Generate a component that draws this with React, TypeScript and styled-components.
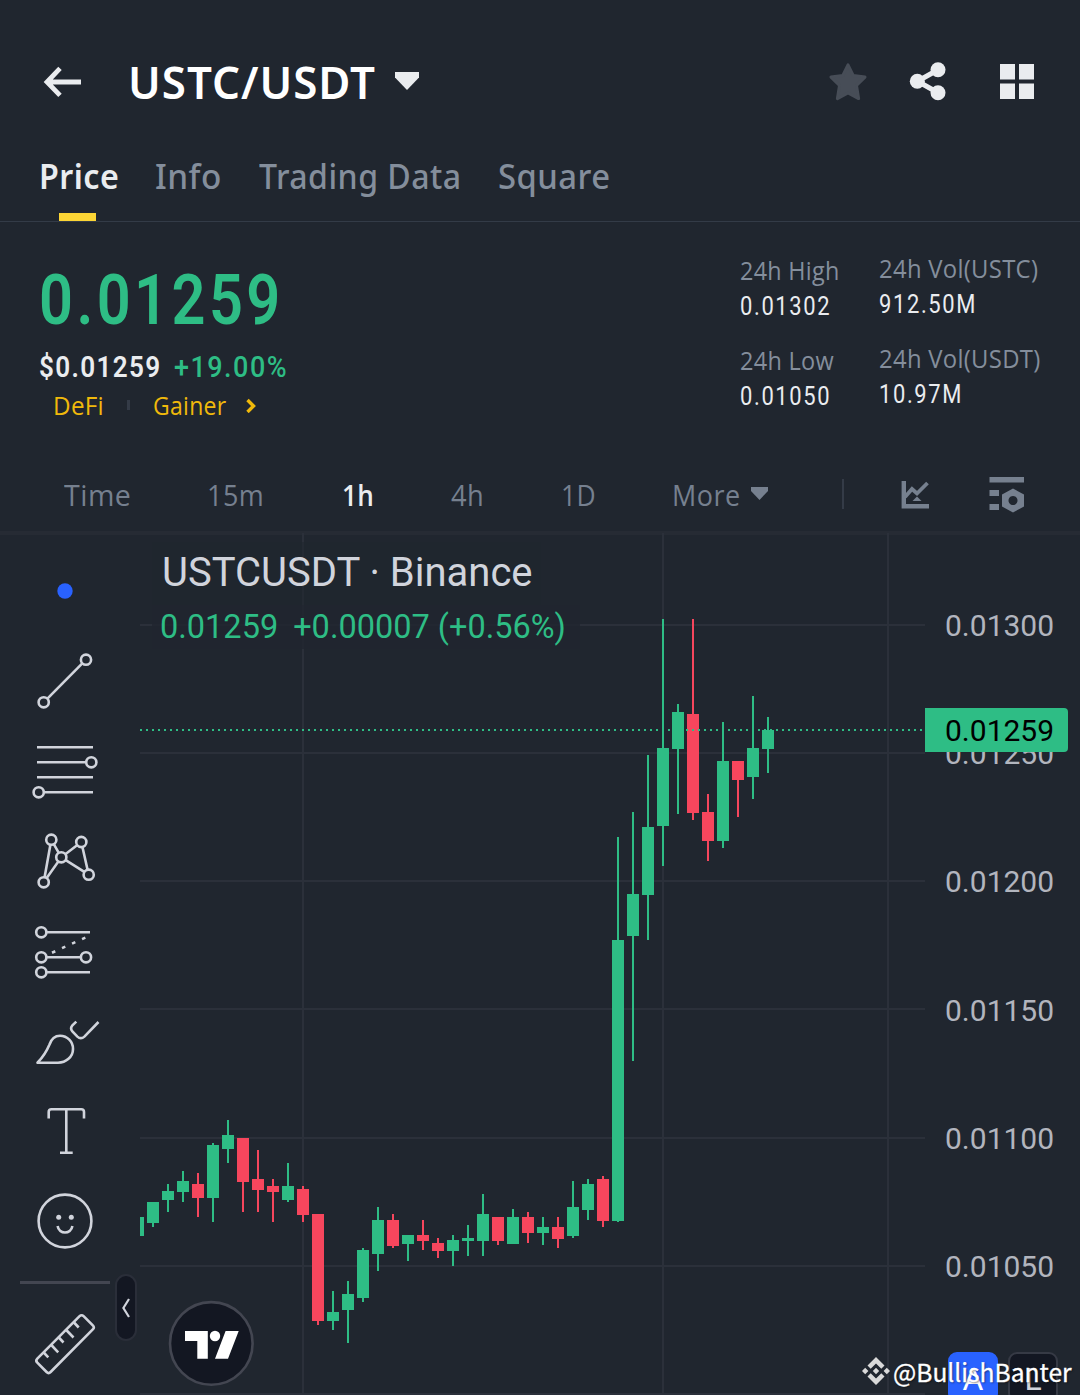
import React from "react";
import styled, { createGlobalStyle, css } from "styled-components";

const GREEN = "#2ebd85";
const RED = "#f6465d";
const BG = "#20262f";
const MUTED = "#848e9c";
const LIGHT = "#eaecef";

const GlobalStyle = createGlobalStyle`
  * { box-sizing: border-box; }
  body { margin: 0; background: ${BG}; }
`;

const Screen = styled.div`
  width: 1080px;
  height: 1395px;
  overflow: hidden;
  display: flex;
  flex-direction: column;
  background: ${BG};
  color: ${LIGHT};
  font-family: Roboto, "Liberation Sans", sans-serif;
  position: relative;
`;

const sans = css`
  font-family: "Open Sans", "Noto Sans", sans-serif;
`;

/* Text run with a fixed box width and horizontal glyph condensing. */
const Run = styled.span<{
  $size: number;
  $w: number;
  $sx?: number;
  $ls?: number;
  $weight?: number;
  $color?: string;
  $face?: "open" | "noto" | "roboto";
}>`
  ${(p) => (p.$face === "roboto" ? "" : sans)}
  ${(p) => (p.$face === "noto" ? 'font-family: "Noto Sans", sans-serif;' : "")}
  display: block;
  flex: none;
  width: ${(p) => p.$w}px;
  white-space: nowrap;
  font-size: ${(p) => p.$size}px;
  line-height: 1.2;
  font-weight: ${(p) => p.$weight ?? 400};
  letter-spacing: ${(p) => p.$ls ?? 0}px;
  color: ${(p) => p.$color ?? LIGHT};
  transform: scaleX(${(p) => p.$sx ?? 1});
  transform-origin: left center;
`;

const Header = styled.header`
  height: 134px;
  padding: 29px 46px 0 43px;
  display: flex;
  align-items: center;
`;

const TitleGroup = styled.div`
  display: flex;
  align-items: center;
  gap: 19px;
  margin-left: 45px;
  flex: 1;
`;

const HeaderActions = styled.div`
  display: flex;
  align-items: center;
  gap: 42px;
`;

const Tabs = styled.nav`
  height: 88px;
  display: flex;
  gap: 37px;
  padding-left: 38px;
  border-bottom: 1px solid #333b47;
`;

const Tab = styled.div`
  display: flex;
  flex-direction: column;
  align-items: center;
  justify-content: space-between;
  padding-top: 21px;
`;

const TabMark = styled.div`
  width: 37px;
  height: 8px;
  background: #fcd535;
`;

const Summary = styled.section`
  height: 238px;
  display: flex;
  justify-content: space-between;
  padding: 0 38px 0 39px;
`;

const PriceBlock = styled.div`
  display: flex;
  flex-direction: column;
  padding-top: 36px;
`;

const SubPrice = styled.div`
  display: flex;
  gap: 13px;
  margin-top: 8px;
`;

const Tags = styled.div`
  display: flex;
  align-items: center;
  margin: 5px 0 0 14px;
`;

const TagSep = styled.div`
  width: 3px;
  height: 10px;
  background: #343b47;
  margin: 0 23px 0 23px;
`;

const Stats = styled.div`
  display: flex;
`;

const StatCol = styled.div<{ $w: number; $top: number }>`
  width: ${(p) => p.$w}px;
  padding-top: ${(p) => p.$top}px;
`;

const Stat = styled.div`
  height: 90px;
  display: flex;
  flex-direction: column;
  gap: 6px;
`;

const Intervals = styled.nav`
  height: 71px;
  display: flex;
  align-items: center;
  padding: 0 54px 0 64px;
`;

const Interval = styled.div<{ $cell: number }>`
  width: ${(p) => p.$cell}px;
  display: flex;
  align-items: center;
`;

const Separator = styled.div`
  width: 2px;
  height: 30px;
  background: #343b47;
  margin: 0 56px 3px 0;
`;

const ChartIcons = styled.div`
  display: flex;
  align-items: center;
  margin-bottom: 2px;
`;

const Rule = styled.div`
  height: 4px;
  background: #262b34;
  flex: none;
`;

const ChartArea = styled.main`
  flex: 1;
  display: flex;
  position: relative;
  min-height: 0;
`;

const Tools = styled.aside`
  width: 140px;
  padding-top: 11px;
  display: flex;
  flex-direction: column;
`;

const ToolIcon = styled.svg`
  width: 130px;
  height: 90px;
  flex: none;
  fill: none;
  stroke: #d1d4dc;
  stroke-width: 2.6;
`;

const ToolDivider = styled.div`
  width: 90px;
  height: 3px;
  margin: 15px 0 15px 20px;
  background: #434651;
  flex: none;
`;

const Plot = styled.svg`
  width: 785px;
  height: 862px;
  margin-top: -2px;
  flex: none;
`;

const Axis = styled.div`
  flex: 1;
  padding: 25.7px 0 0 20px;
`;

const AxisLabel = styled.div`
  height: 128.3px;
  font-size: 30px;
  line-height: 130px;
  color: #b2b5be;
`;

const PriceTag = styled.div`
  position: absolute;
  left: 925px;
  top: 173px;
  width: 143px;
  height: 44px;
  padding-left: 20px;
  border-radius: 0 4px 4px 0;
  background: ${GREEN};
  color: #000;
  font-size: 30px;
  line-height: 45px;
`;

const Legend = styled.div`
  position: absolute;
  left: 152px;
  top: 7px;
  display: flex;
  flex-direction: column;
  align-items: flex-start;
`;

const LegendTitle = styled.div`
  padding: 0 8px 0 10px;
  height: 63px;
  font-size: 40px;
  line-height: 61px;
  color: #d1d4dc;
  background: rgba(32, 38, 47, 0.6);
`;

const LegendValues = styled.div`
  display: flex;
  gap: 15px;
  width: 428px;
  height: 44px;
  padding-left: 8px;
  font-size: 32.5px;
  line-height: 44px;
  color: ${GREEN};
  background: rgba(32, 38, 47, 0.8);
  white-space: nowrap;
`;

const Collapse = styled.div`
  position: absolute;
  left: 115px;
  top: 739px;
  width: 22px;
  height: 67px;
  border: 2px solid #2a2e39;
  border-radius: 11px;
  background: #131722;
  display: flex;
  align-items: center;
  justify-content: center;
`;

const Brand = styled.svg`
  position: absolute;
  left: 168px;
  top: 765px;
  width: 87px;
  height: 87px;
`;

const ScaleButton = styled.div<{ $left: number; $active?: boolean }>`
  position: absolute;
  left: ${(p) => p.$left}px;
  top: 817px;
  width: 50px;
  height: 50px;
  border-radius: 9px;
  border: 2px solid ${(p) => (p.$active ? "#2962ff" : "#363a45")};
  background: ${(p) => (p.$active ? "#2962ff" : "#131722")};
  color: ${(p) => (p.$active ? "#fff" : "#d1d4dc")};
  font-size: 32px;
  line-height: 51px;
  text-align: center;
`;

const Watermark = styled.div`
  position: absolute;
  left: 862px;
  top: 1351px;
  height: 40px;
  display: flex;
  align-items: center;
  gap: 3px;
  font-family: "Noto Sans CJK SC", sans-serif;
  font-size: 24.6px;
  font-weight: 400;
  line-height: 40px;
  color: #fff;
  -webkit-text-stroke: 0.3px #fff;
  text-shadow: 1px 1px 2px rgba(0, 0, 0, 0.5);
  white-space: nowrap;
`;

type Candle = [number, number, number, number, boolean];

/* wick top, body top, body bottom, wick bottom, rising */
const candles: Candle[] = [
  [1217, 1217, 1236, 1236, true],
  [1202, 1202, 1223, 1227, true],
  [1184, 1191, 1200, 1212, true],
  [1171, 1181, 1192, 1202, true],
  [1173, 1184, 1198, 1217, false],
  [1143, 1145, 1198, 1222, true],
  [1120, 1135, 1149, 1163, true],
  [1138, 1138, 1182, 1212, false],
  [1150, 1179, 1190, 1212, false],
  [1179, 1186, 1192, 1222, false],
  [1163, 1186, 1200, 1202, true],
  [1186, 1189, 1215, 1222, false],
  [1214, 1214, 1321, 1325, false],
  [1291, 1312, 1321, 1330, true],
  [1281, 1294, 1310, 1343, true],
  [1248, 1250, 1298, 1302, true],
  [1207, 1220, 1254, 1271, true],
  [1214, 1220, 1246, 1248, false],
  [1235, 1235, 1244, 1261, true],
  [1220, 1235, 1241, 1250, false],
  [1238, 1243, 1251, 1258, false],
  [1235, 1240, 1251, 1266, true],
  [1225, 1238, 1241, 1256, true],
  [1194, 1214, 1241, 1256, true],
  [1217, 1217, 1241, 1245, false],
  [1209, 1217, 1244, 1244, true],
  [1212, 1217, 1233, 1243, false],
  [1217, 1227, 1233, 1245, true],
  [1217, 1227, 1239, 1248, false],
  [1181, 1207, 1236, 1238, true],
  [1179, 1184, 1210, 1220, true],
  [1176, 1179, 1221, 1227, false],
  [837, 940, 1221, 1222, true],
  [812, 894, 936, 1061, true],
  [755, 827, 895, 940, true],
  [619, 748, 826, 866, true],
  [704, 712, 749, 814, true],
  [619, 714, 813, 820, false],
  [794, 812, 841, 861, false],
  [722, 761, 841, 848, true],
  [761, 761, 780, 817, false],
  [696, 748, 777, 799, true],
  [717, 730, 749, 773, true],
];

const gridRows = [625, 753, 881, 1009, 1138, 1266, 1394];
const gridCols = [303, 663, 888];

const CandleChart = () => (
  <Plot viewBox="140 533 785 862" shapeRendering="crispEdges">
    {gridCols.map((x) => (
      <rect key={x} x={x - 1} y={533} width={2} height={862} fill="#2b303a" />
    ))}
    {gridRows.map((y) => (
      <rect key={y} x={140} y={y - 1} width={785} height={2} fill="#2b303a" />
    ))}
    {candles.map(([wt, bt, bb, wb, up], i) => {
      const x = 138 + i * 15;
      return (
        <g key={i} fill={up ? GREEN : RED}>
          <rect x={x - 1} y={wt} width={2} height={wb - wt} />
          <rect x={x - 6} y={bt} width={12} height={bb - bt} />
        </g>
      );
    })}
    <line x1={140} x2={925} y1={730} y2={730} stroke={GREEN} strokeWidth={2} strokeDasharray="2 4" />
  </Plot>
);

const node = (x: number, y: number) => <circle key={`${x}-${y}`} cx={x} cy={y} r={5.1} fill={BG} />;

const ToolBar = () => (
  <Tools>
    <ToolIcon viewBox="0 0 130 90">
      <circle cx="65" cy="45" r="7.7" fill="#2962ff" stroke="none" />
    </ToolIcon>
    <ToolIcon viewBox="0 0 130 90">
      <path d="M43.7 66.3L86 23.7" />
      {node(43.7, 66.3)}
      {node(86, 23.7)}
    </ToolIcon>
    <ToolIcon viewBox="0 0 130 90">
      <path d="M37 21.3H93M37 36.3H91M37 51.3H93M38 66.3H93" />
      {node(91.3, 36.3)}
      {node(38.7, 66.3)}
    </ToolIcon>
    <ToolIcon viewBox="0 0 130 90">
      <path d="M61.3 41.3L51.3 23.7L43.7 66.3L61.3 41.3L81.3 26L88.7 58.7Z" />
      {node(51.3, 23.7)}
      {node(81.3, 26)}
      {node(61.3, 41.3)}
      {node(43.7, 66.3)}
      {node(88.7, 58.7)}
    </ToolIcon>
    <ToolIcon viewBox="0 0 130 90">
      <path d="M41 26.3H90M41 51.3H86M41 66.3H90" />
      <path d="M52 46.7L86 31.3" strokeDasharray="3.6 7.4" />
      {node(41.3, 26.3)}
      {node(41.3, 51.3)}
      {node(86, 51.3)}
      {node(41.3, 66.3)}
    </ToolIcon>
    <ToolIcon viewBox="0 0 130 90">
      <path d="M37.5 66.7C43 61 47 54.5 49.5 48.5C51.3 43 55 39.7 60 39.7A13 13 0 0 1 73 53C73 61 66 66.7 58 66.7Z" strokeLinejoin="round" />
      <path d="M76.3 25.6L72.4 29.4Q69.8 32.4 72.4 35.5L77.4 40.6Q80.8 43.8 84.4 40.6L98.5 26" />
    </ToolIcon>
    <ToolIcon viewBox="0 0 130 90">
      <path d="M48.7 32.5V26Q48.7 23.3 51.5 23.3H81.2Q84 23.3 84 26V32.5M66.3 23.3V66.7M60 66.7H72.7" />
    </ToolIcon>
    <ToolIcon viewBox="0 0 130 90">
      <circle cx="65" cy="45" r="26.4" />
      <circle cx="58.7" cy="41.3" r="2.5" fill="#d1d4dc" stroke="none" />
      <circle cx="71.3" cy="41.3" r="2.5" fill="#d1d4dc" stroke="none" />
      <path d="M57.6 50C59 58.7 71 58.7 72.4 50" />
    </ToolIcon>
    <ToolDivider />
    <ToolIcon viewBox="0 0 130 90">
      <path d="M79.6 17.2Q81.6 15.2 83.6 17.2L92.8 26.4Q94.8 28.4 92.8 30.4L50.6 73Q48.6 75 46.6 73L37.3 63.7Q35.3 61.7 37.3 59.7Z" />
      <path d="M43.7 53.5L48.3 58.3M51.3 46L58.2 53.3M58.8 38.5L63.5 43.5M66.2 31L73.5 38.5M74 23.5L78.7 28.5" />
    </ToolIcon>
  </Tools>
);

const ArrowIcon = () => (
  <svg width="40" height="36" viewBox="0 0 40 36" fill="none" stroke={LIGHT} strokeWidth="4.8">
    <path d="M38 18H5M17 4.4L4 18L17 31.4" />
  </svg>
);

const StarIcon = () => (
  <svg width="38" height="40" viewBox="0 0 38 40">
    <path
      d="M19 2.8L24.2 13.5L36 15.1L27.5 23.4L29.6 36.6L19 31L8.4 36.6L10.5 23.4L2 15.1L13.8 13.5Z"
      fill="#474d57"
      stroke="#474d57"
      strokeWidth="3"
      strokeLinejoin="round"
    />
  </svg>
);

const ShareIcon = () => (
  <svg width="38" height="40" viewBox="0 0 38 40" fill={LIGHT}>
    <path d="M29.5 7.5L8.5 19.2L29.5 31" fill="none" stroke={LIGHT} strokeWidth="5" />
    <circle cx="8.3" cy="19.2" r="7.5" />
    <circle cx="29" cy="7.7" r="7.5" />
    <circle cx="29" cy="30.8" r="7.5" />
  </svg>
);

const GridIcon = () => (
  <svg width="34" height="35" viewBox="0 0 34 35" fill={LIGHT}>
    <path d="M0 0H15V15.5H0ZM19 0H34V15.5H19ZM0 19.5H15V35H0ZM19 19.5H34V35H19Z" />
  </svg>
);

const HeaderIcons = styled(HeaderActions)`
  & > svg:last-child {
    margin-left: 11px;
  }
`;

const tabs: { text: string; w: number; sx: number }[] = [
  { text: "Price", w: 79, sx: 0.935 },
  { text: "Info", w: 67, sx: 0.965 },
  { text: "Trading Data", w: 202, sx: 0.93 },
  { text: "Square", w: 113, sx: 0.95 },
];

const TabText = styled(Run)`
  position: relative;
  left: 1px;
`;

const intervals = [
  { text: "Time", cell: 143, w: 67, sx: 0.985 },
  { text: "15m", cell: 135, w: 57, sx: 0.93 },
  { text: "1h", cell: 109, w: 32, sx: 0.9, active: true },
  { text: "4h", cell: 110, w: 32, sx: 0.94 },
  { text: "1D", cell: 111, w: 35, sx: 0.91 },
];

const StatItem = ({ label, value, w, sx }: { label: string; value: string; w: number; sx: number }) => (
  <Stat>
    <Run $size={25} $w={w} $sx={sx} $ls={0.3} $color={MUTED}>
      {label}
    </Run>
    <Run $size={25.5} $w={w} $sx={0.86} $ls={1.9} $face="roboto">
      {value}
    </Run>
  </Stat>
);

export default function App() {
  return (
    <>
      <GlobalStyle />
      <Screen>
        <Header>
          <ArrowIcon />
          <TitleGroup>
            <Run $size={45.5} $w={248} $sx={0.965} $ls={1} $weight={600} $color="#fff" $face="noto">
              USTC/USDT
            </Run>
            <svg width="24" height="22" viewBox="0 0 24 22">
              <path d="M0 1H24V6.5L12 19L0 6.5Z" fill={LIGHT} />
            </svg>
          </TitleGroup>
          <HeaderIcons>
            <StarIcon />
            <ShareIcon />
            <GridIcon />
          </HeaderIcons>
        </Header>
        <Tabs>
          {tabs.map((t, i) => (
            <Tab key={t.text}>
              <TabText
                $size={34.5}
                $w={t.w}
                $sx={t.sx}
                $ls={0.5}
                $weight={i === 0 ? 600 : 500}
                $color={i === 0 ? LIGHT : MUTED}
                $face="noto"
              >
                {t.text}
              </TabText>
              {i === 0 && <TabMark />}
            </Tab>
          ))}
        </Tabs>
        <Summary>
          <PriceBlock>
            <Run $size={70} $w={242} $sx={0.85} $ls={4} $weight={650} $color={GREEN} $face="roboto">
              0.01259
            </Run>
            <SubPrice>
              <Run $size={29} $w={122} $sx={0.9} $ls={1.5} $weight={600} $face="roboto">
                $0.01259
              </Run>
              <Run $size={29} $w={114} $sx={0.93} $ls={1.6} $weight={500} $color={GREEN} $face="roboto">
                +19.00%
              </Run>
            </SubPrice>
            <Tags>
              <Run $size={25} $w={51} $sx={0.97} $ls={0.3} $color="#f0b90b">
                DeFi
              </Run>
              <TagSep />
              <Run $size={25} $w={74} $sx={0.92} $ls={0.3} $color="#f0b90b">
                Gainer
              </Run>
              <svg width="34" height="16" viewBox="0 0 34 16" fill="none" stroke="#f0b90b" strokeWidth="3.4">
                <path d="M20.5 3L26.5 9L20.5 15" />
              </svg>
            </Tags>
          </PriceBlock>
          <Stats>
            <StatCol $w={139} $top={33}>
              <StatItem label="24h High" value="0.01302" w={100} sx={0.935} />
              <StatItem label="24h Low" value="0.01050" w={100} sx={0.94} />
            </StatCol>
            <StatCol $w={163} $top={31}>
              <StatItem label="24h Vol(USTC)" value="912.50M" w={162} sx={0.955} />
              <StatItem label="24h Vol(USDT)" value="10.97M" w={162} sx={0.955} />
            </StatCol>
          </Stats>
        </Summary>
        <Intervals>
          {intervals.map((t) => (
            <Interval key={t.text} $cell={t.cell}>
              <Run
                $size={29}
                $w={t.w}
                $sx={t.sx}
                $ls={0.5}
                $weight={t.active ? 600 : 400}
                $color={t.active ? LIGHT : "#76808f"}
              >
                {t.text}
              </Run>
            </Interval>
          ))}
          <Interval $cell={170}>
            <Run $size={29} $w={79} $sx={0.93} $ls={0.5} $color="#76808f">
              More
            </Run>
            <svg width="18" height="20" viewBox="0 0 18 20">
              <path d="M0 2H17V6L8.5 15L0 6Z" fill="#76808f" />
            </svg>
          </Interval>
          <Separator />
          <ChartIcons>
            <svg width="30" height="30" viewBox="900 479 30 30" fill="none" stroke="#76808f" strokeWidth="4.4">
              <path d="M903.8 480V505.3H929" />
              <path d="M905 496L912 488L917 492.5L927.5 482" strokeWidth="3.8" />
              <path d="M912.5 500L917 495.5L921.5 500Z" fill="#76808f" stroke="none" />
            </svg>
            <svg width="95" height="38" viewBox="930 476 95 38" fill="#76808f">
              <path d="M989.5 477H1024V482.5H989.5ZM989.5 490H999V496H989.5ZM989.5 504H999V510H989.5Z" />
              <path
                fillRule="evenodd"
                d="M1013 488.5L1024 494.5V506.5L1013 512.5L1002 506.5V494.5ZM1013 496A4.5 4.5 0 1 0 1013.01 496Z"
              />
            </svg>
          </ChartIcons>
        </Intervals>
        <Rule />
        <ChartArea>
          <ToolBar />
          <CandleChart />
          <Axis>
            {["0.01300", "0.01250", "0.01200", "0.01150", "0.01100", "0.01050"].map((p) => (
              <AxisLabel key={p}>{p}</AxisLabel>
            ))}
          </Axis>
          <PriceTag>0.01259</PriceTag>
          <Legend>
            <LegendTitle>USTCUSDT · Binance</LegendTitle>
            <LegendValues>
              <span>0.01259</span>
              <span>+0.00007 (+0.56%)</span>
            </LegendValues>
          </Legend>
          <Collapse>
            <svg width="10" height="22" viewBox="0 0 10 22" fill="none" stroke="#d1d4dc" strokeWidth="2.2">
              <path d="M8 2L2.4 11L8 20" />
            </svg>
          </Collapse>
          <Brand viewBox="168 1300 87 87">
            <circle cx="211.3" cy="1343.4" r="41.3" fill="#131722" stroke="#434651" strokeWidth="2.6" />
            <path
              d="M185 1331H207.8V1358.7H197.3V1341H185ZM225.6 1331H238.7L228 1358.7H215Z"
              fill="#fff"
            />
            <circle cx="215" cy="1336" r="5.2" fill="#fff" />
          </Brand>
          <ScaleButton $left={948} $active>
            A
          </ScaleButton>
          <ScaleButton $left={1008}>L</ScaleButton>
        </ChartArea>
        <Watermark>
          <svg width="28" height="28" viewBox="0 0 28 28" fill="#d9d9d9">
            <path d="M14 0L22.5 8.5L19.3 11.7L14 6.4L8.7 11.7L5.5 8.5ZM14 28L22.5 19.5L19.3 16.3L14 21.6L8.7 16.3L5.5 19.5ZM14 10.8L17.2 14L14 17.2L10.8 14ZM3.2 10.8L6.4 14L3.2 17.2L0 14ZM24.8 10.8L28 14L24.8 17.2L21.6 14Z" />
          </svg>
          @BullishBanter
        </Watermark>
      </Screen>
    </>
  );
}
